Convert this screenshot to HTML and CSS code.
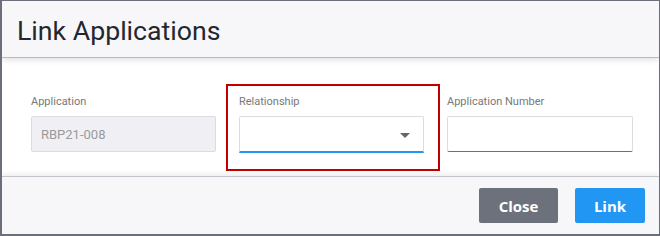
FILE: index.html
```html
<!DOCTYPE html>
<html lang="en">
<head>
  <meta charset="UTF-8" />
  <title>Link Applications</title>
  <link rel="stylesheet" href="styles.css">
</head>
<body>
  <div class="modal">
    <div class="modal-header">
      <h2>Link Applications</h2>
    </div>
    <div class="modal-body">
      <div class="field">
        <label>Application</label>
        <input type="text" class="readonly" value="RBP21-008" readonly>
      </div>
      <div class="field highlight">
        <label>Relationship</label>
        <div class="select">
          <span class="caret"></span>
        </div>
      </div>
      <div class="field">
        <label>Application Number</label>
        <input type="text" class="plain">
      </div>
    </div>
    <div class="modal-footer">
      <button class="btn btn-close">Close</button>
      <button class="btn btn-link">Link</button>
    </div>
  </div>
</body>
</html>
```

FILE: styles.css
```css
body {
  margin: 0;
  font-family: Roboto, "Liberation Sans", sans-serif;
  background: #ffffff;
}
.modal {
  width: 660px;
  height: 236px;
  box-sizing: border-box;
  border: 1px solid #6b6f7a;
  border-left-width: 2px;
  border-bottom-width: 2px;
  display: flex;
  flex-direction: column;
  overflow: hidden;
}
.modal-header {
  height: 57px;
  box-sizing: border-box;
  background: #f7f7fa;
  border-bottom: 1px solid #b9b9c6;
  box-shadow: 0 2px 6px rgba(0, 0, 0, 0.12);
  padding: 3px 15px 0;
  display: flex;
  align-items: center;
  position: relative;
  z-index: 1;
}
.modal-header h2 {
  margin: 0;
  font-size: 26.7px;
  font-weight: 400;
  color: #23272e;
}
.modal-body {
  display: grid;
  grid-template-columns: 185px 185px 186px;
  column-gap: 23px;
  padding: 37px 0 23px 29px;
  background: #fff;
}
.field label {
  display: block;
  font-size: 11px;
  line-height: 14px;
  color: #787878;
  margin-bottom: 7px;
}
.field input {
  display: block;
  width: 100%;
  height: 36px;
  box-sizing: border-box;
  border: 1px solid #dcdce0;
  border-radius: 2px;
  padding: 0 9px;
  font-family: Roboto, "Liberation Sans", sans-serif;
  font-size: 13px;
  outline: none;
}
.readonly {
  background: #f0f0f4;
  color: #9a9a9a;
}
.plain {
  background: #fff;
  border-bottom-color: #6f6f6f !important;
}
.highlight {
  position: relative;
}
.highlight::after {
  content: "";
  position: absolute;
  left: -13px;
  right: -16px;
  top: -11px;
  bottom: -18px;
  border: 2px solid #c00000;
}
.select {
  height: 37px;
  box-sizing: border-box;
  border: 1px solid #dcdce0;
  border-bottom: 2px solid #2196f3;
  border-radius: 2px 2px 0 0;
  position: relative;
}
.caret {
  position: absolute;
  right: 13px;
  top: 16px;
  border-left: 5px solid transparent;
  border-right: 5px solid transparent;
  border-top: 5px solid #666;
}
.modal-footer {
  flex: 1;
  background: #f7f7fa;
  border-top: 1px solid #c4c4cc;
  box-shadow: 0 -2px 5px rgba(0, 0, 0, 0.08);
  display: flex;
  justify-content: flex-end;
  align-items: flex-start;
  gap: 17px;
  padding: 11px 14px 0 0;
}
.btn {
  height: 35px;
  border: none;
  border-radius: 2px;
  color: #fff;
  font-family: "Open Sans", "Liberation Sans", sans-serif;
  font-weight: 700;
  font-size: 15px;
  cursor: pointer;
}
.btn-close {
  width: 79px;
  background: #6c717c;
}
.btn-link {
  width: 70px;
  background: #2196f3;
}
```
